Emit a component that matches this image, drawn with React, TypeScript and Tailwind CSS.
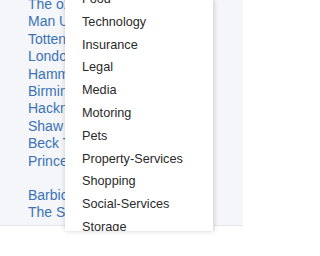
import React from 'react';

const venues = [
  'The o2 Arena',
  'Man United',
  'Tottenham Hotspur',
  'London Stadium',
  'Hammersmith Apollo',
  'Birmingham NEC',
  'Hackney Empire',
  'Shaw Theatre',
  'Beck Theatre',
  'Princes Theatre',
];

const moreVenues = ['Barbican Centre', 'The Shard'];

const categories = [
  'Food',
  'Technology',
  'Insurance',
  'Legal',
  'Media',
  'Motoring',
  'Pets',
  'Property-Services',
  'Shopping',
  'Social-Services',
  'Storage',
];

export default function App() {
  return (
    <div className="relative h-[256px] w-[243px] overflow-hidden bg-white font-['Liberation_Sans',Arial,sans-serif]">
      {/* page area */}
      <div className="h-[226px] overflow-hidden border-b border-[#e2e5e9] bg-[#f4f6f9]">
        <ul className="-mt-[4px] pl-[28px] text-[14px] leading-[17.4px] text-[#3b72b6]">
          {venues.map((v) => (
            <li key={v} className="whitespace-nowrap">{v}</li>
          ))}
          <li className="h-[17px]" />
          {moreVenues.map((v) => (
            <li key={v} className="whitespace-nowrap">{v}</li>
          ))}
        </ul>
      </div>

      {/* open dropdown menu */}
      <div className="absolute left-[65px] top-0 h-[231px] w-[149px] overflow-hidden border-r border-[#dcdfe3] bg-white shadow-[0_0_5px_rgba(0,0,0,0.18)]">
        <ul className="-mt-[12px] text-[12.7px] leading-[22.8px] text-[#2a2a2a]">
          {categories.map((c) => (
            <li key={c} className="whitespace-nowrap pl-[17px]">{c}</li>
          ))}
        </ul>
      </div>
    </div>
  );
}
